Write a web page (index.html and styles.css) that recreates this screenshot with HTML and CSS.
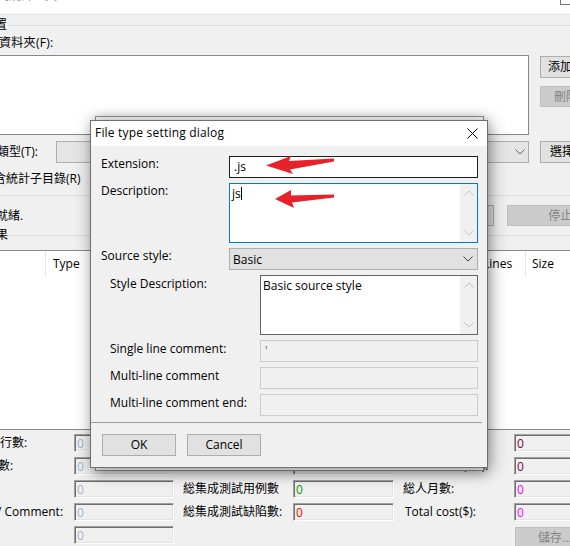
FILE: index.html
```html
<!DOCTYPE html>
<html>
<head>
<meta charset="utf-8">
<link rel="stylesheet" href="styles.css">
</head>
<body>
<div class="titlebar"><span class="app-title">碼統計工具</span><span class="maxbox"></span></div>
<div class="main">
  <div class="group-head"><span class="gh-label">置</span><span class="gh-line"></span></div>
  <div class="field-label">資料夾(F):</div>
  <div class="list-row">
    <div class="listbox"></div>
    <div class="btn-col">
      <div class="btn pad-add">添加(A)...</div>
      <div class="btn disabled pad-del">刪除(D)</div>
    </div>
  </div>
  <div class="type-row">
    <span class="type-label">類型(T):</span>
    <div class="combo"><svg width="10" height="6" viewBox="0 0 10 6"><polyline points="0.5,0.5 5,5 9.5,0.5" fill="none" stroke="#606060" stroke-width="1"/></svg></div>
    <div class="btn pad-sel">選擇(S)...</div>
  </div>
  <div class="check-row">含統計子目錄(R)</div>
  <div class="sep"></div>
  <div class="status-row">
    <span class="status-text">就緒.</span>
    <div class="btn st-btn"></div>
    <div class="btn disabled stop">停止(S)</div>
  </div>
  <div class="group-head g2"><span class="gh-label g2l">果</span><span class="gh-line"></span></div>
  <div class="listview">
    <div class="lv-header">
      <div class="lv-cell c1"></div>
      <div class="lv-cell c2">Type</div>
      <div class="lv-cell c3">Lines</div>
      <div class="lv-cell c4">Size</div>
    </div>
  </div>
  <div class="stats">
    <span class="sl l1">行數:</span><span class="sf blue">0</span>
    <span class="sl"></span><span class="sf red">0</span>
    <span class="sl"></span><span class="sf maroon">0</span>

    <span class="sl l2">數:</span><span class="sf blue">0</span>
    <span class="sl">総單元測試缺陷數:</span><span class="sf red">0</span>
    <span class="sl">総文件大小(KB):</span><span class="sf maroon">0</span>

    <span class="sl l3">:</span><span class="sf blue">0</span>
    <span class="sl">総集成測試用例數</span><span class="sf green">0</span>
    <span class="sl">総人月數:</span><span class="sf magenta">0</span>

    <span class="sl l4">/ Comment:</span><span class="sf blue">0</span>
    <span class="sl">総集成測試缺陷數:</span><span class="sf red">0</span>
    <span class="sl lat">Total cost($):</span><span class="sf magenta">0</span>

    <span class="sl l3">:</span><span class="sf blue">0</span>
    <span class="sl"></span><span class="sl"></span>
    <span class="sl"></span><div class="btn disabled save">儲存...</div>
  </div>
</div>

<div class="rear-win"></div>
<div class="dialog">
  <div class="dlg-title">
    <span class="dlg-title-text">File type setting dialog</span>
    <svg class="close" width="11" height="11" viewBox="0 0 11 11"><path d="M0.5 0.5 L10.5 10.5 M10.5 0.5 L0.5 10.5" stroke="#000" stroke-width="1" fill="none"/></svg>
  </div>
  <div class="dlg-body">
    <div class="frow first">
      <span class="flabel">Extension:</span>
      <div class="tb ext">.js</div>
    </div>
    <div class="frow">
      <span class="flabel">Description:</span>
      <div class="ta focus">
        <div class="ta-text">js<span class="caret"></span></div>
        <div class="vscroll">
          <svg width="10" height="6" viewBox="0 0 10 6"><polyline points="0.5,5.5 5,1 9.5,5.5" fill="none" stroke="#c2c2c2" stroke-width="1"/></svg>
          <svg width="10" height="6" viewBox="0 0 10 6"><polyline points="0.5,0.5 5,5 9.5,0.5" fill="none" stroke="#c2c2c2" stroke-width="1"/></svg>
        </div>
      </div>
    </div>
    <div class="frow">
      <span class="flabel">Source style:</span>
      <div class="dcombo"><span>Basic</span><svg width="10" height="6" viewBox="0 0 10 6"><polyline points="0.5,0.5 5,5 9.5,0.5" fill="none" stroke="#404040" stroke-width="1"/></svg></div>
    </div>
    <div class="frow sub">
      <span class="flabel">Style Description:</span>
      <div class="ta dark">
        <div class="ta-text">Basic source style</div>
        <div class="vscroll">
          <svg width="10" height="6" viewBox="0 0 10 6"><polyline points="0.5,5.5 5,1 9.5,5.5" fill="none" stroke="#c2c2c2" stroke-width="1"/></svg>
          <svg width="10" height="6" viewBox="0 0 10 6"><polyline points="0.5,0.5 5,5 9.5,0.5" fill="none" stroke="#c2c2c2" stroke-width="1"/></svg>
        </div>
      </div>
    </div>
    <div class="frow sub">
      <span class="flabel">Single line comment:</span>
      <div class="tb dis">'</div>
    </div>
    <div class="frow sub">
      <span class="flabel">Multi-line comment</span>
      <div class="tb dis"></div>
    </div>
    <div class="frow sub">
      <span class="flabel">Multi-line comment end:</span>
      <div class="tb dis"></div>
    </div>
    <div class="dlg-sep"></div>
    <div class="dlg-buttons">
      <div class="dbtn">OK</div>
      <div class="dbtn">Cancel</div>
    </div>
  </div>
</div>

<svg class="annot" width="570" height="546" viewBox="0 0 570 546">
  <polygon points="266,165.5 291,156 289,161 334,158.5 334,161.5 290,169.5 293,174" fill="#e8202a"/>
  <polygon points="275,199 291,190 291,195.5 334,194.5 334,197.5 292,202.5 294,208" fill="#e8202a"/>
</svg>
</body>
</html>
```

FILE: styles.css
```css
* { box-sizing: border-box; }
html, body { margin: 0; padding: 0; }
body {
  width: 570px;
  height: 546px;
  overflow: hidden;
  position: relative;
  background: #f0f0f0;
  font-family: "Open Sans", "Noto Sans CJK TC", sans-serif;
  font-size: 12px;
  color: #000;
}

/* main window */
.titlebar {
  height: 13px;
  background: #fff;
  display: flex;
  overflow: hidden;
}
.app-title {
  color: #8a8a8a;
  line-height: 14px;
  margin-top: -11px;
  margin-left: -3px;
  white-space: nowrap;
}
.maxbox {
  margin-left: auto;
  margin-right: -6px;
  width: 16px;
  height: 6px;
  margin-top: -1px;
  border: 1px solid #777;
  flex-shrink: 0;
}
.main {
  display: flex;
  flex-direction: column;
}
.group-head {
  display: flex;
  align-items: center;
  height: 14px;
  margin-top: 5px;
}
.gh-label {
  line-height: 14px;
  margin-left: -5px;
  white-space: nowrap;
}
.gh-line {
  flex: 1;
  height: 1px;
  background: #dcdcdc;
  margin-left: 1px;
}
.field-label {
  line-height: 14px;
  margin-top: 4px;
  margin-left: -1px;
  letter-spacing: 0.3px;
}
.list-row {
  display: flex;
  margin-top: 5px;
}
.listbox {
  margin-left: -10px;
  width: 539px;
  height: 80px;
  flex-shrink: 0;
  background: #fff;
  border: 1px solid #828790;
}
.btn-col {
  margin-left: 11px;
  display: flex;
  flex-direction: column;
  gap: 8px;
  padding-top: 1px;
  flex-shrink: 0;
}
.btn {
  height: 22px;
  width: 80px;
  flex-shrink: 0;
  background: #e1e1e1;
  border: 1px solid #adadad;
  line-height: 20px;
  white-space: nowrap;
  overflow: hidden;
}
.btn.disabled {
  background: #cccccc;
  border-color: #bfbfbf;
  color: #838383;
}
.pad-add { padding-left: 7px; }
.pad-del { padding-left: 13px; height: 21px; }
.pad-sel { padding-left: 9px; margin-left: 11px; }

.type-row {
  display: flex;
  align-items: center;
  margin-top: 6px;
  height: 22px;
}
.type-label {
  width: 59px;
  margin-left: -3px;
  flex-shrink: 0;
  line-height: 14px;
  white-space: nowrap;
}
.combo {
  width: 473px;
  height: 22px;
  flex-shrink: 0;
  background: #e5e5e5;
  border: 1px solid #adadad;
  display: flex;
  justify-content: flex-end;
  align-items: center;
  padding-right: 3px;
}
.check-row {
  line-height: 14px;
  margin-top: 9px;
  margin-left: -6px;
  white-space: nowrap;
}
.sep {
  height: 1px;
  background: #dcdcdc;
  margin-top: 9px;
}
.status-row {
  display: flex;
  align-items: center;
  height: 21px;
  margin-top: 9px;
}
.status-text {
  width: 423px;
  flex-shrink: 0;
  margin-left: -4px;
  line-height: 14px;
  white-space: nowrap;
}
.st-btn { width: 75px; height: 21px; text-align: center; }
.stop { width: 120px; height: 21px; margin-left: 13px; text-align: center; }

.g2 { margin-top: 2px; }
.g2l { margin-left: -4px; }

.listview {
  margin-top: 8px;
  height: 180px;
  background: #fff;
  border-top: 1px solid #828790;
  border-bottom: 1px solid #828790;
}
.lv-header {
  display: flex;
  height: 25px;
}
.lv-cell {
  height: 25px;
  line-height: 25px;
  border-right: 1px solid #e5e5e5;
  flex-shrink: 0;
  white-space: nowrap;
  overflow: hidden;
}
.c1 { width: 46px; }
.c2 { width: 429px; padding-left: 7px; border-right: none; }
.c3 { width: 51px; padding-left: 8px; }
.c4 { width: 80px; padding-left: 6px; border-right: none; }

.stats {
  margin-top: 4px;
  display: grid;
  grid-template-columns: 74px 100px 119px 101px 120px 80px;
  grid-auto-rows: 18px;
  row-gap: 5px;
}
.sl {
  line-height: 18px;
  white-space: nowrap;
  padding-left: 9px;
}
.sl.lat { padding-left: 11px; }
.l1 { padding-left: 0; }
.l2 { padding-left: 0; margin-left: -2px; }
.l3 { padding-left: 0; margin-left: -9px; }
.l4 { padding-left: 0; margin-left: -3px; }
.sf {
  height: 18px;
  line-height: 15px;
  padding-left: 2px;
  background: #f0f0f0;
  border: 1px solid;
  border-color: #a0a0a0 #ffffff #ffffff #a0a0a0;
  box-shadow: inset 1px 1px 0 #6f6f6f, inset -1px -1px 0 #e3e3e3;
  padding-top: 1px;
}
.blue { color: #9fb4d0; }
.red { color: #ff0000; }
.green { color: #00a000; }
.maroon { color: #800040; }
.magenta { color: #ff00ff; }
.save {
  margin-left: 1px;
  margin-top: 1px;
  height: 22px;
  padding-left: 22px;
}

/* dialogs */
.rear-win {
  position: absolute;
  left: 95px;
  top: 116px;
  width: 389px;
  height: 355px;
  background: #f7f7f7;
  border: 1px solid #8f8f8f;
  box-shadow: 1px 2px 10px rgba(0,0,0,0.25);
}
.dialog {
  position: absolute;
  left: 90px;
  top: 120px;
  width: 398px;
  background: #f0f0f0;
  border: 1px solid #6f6f6f;
  box-shadow: 2px 3px 16px rgba(0,0,0,0.42);
}
.dlg-title {
  height: 25px;
  background: #fff;
  display: flex;
  align-items: center;
  padding-left: 4px;
}
.dlg-title-text { line-height: 16px; margin-top: -1px; letter-spacing: 0.2px; }
.close { margin-left: auto; margin-right: 9px; }
.dlg-body {
  padding: 10px 8px 11px 10px;
  display: flex;
  flex-direction: column;
}
.frow {
  display: flex;
  margin-top: 5px;
}
.frow.first { margin-top: 0; }
.flabel {
  width: 128px;
  flex-shrink: 0;
  line-height: 14px;
  padding-top: 1px;
  white-space: nowrap;
}
.frow.sub { padding-left: 9px; }
.frow.sub .flabel { width: 150px; padding-top: 2px; }
.tb {
  width: 249px;
  height: 22px;
  flex-shrink: 0;
  background: #fff;
  border: 1px solid #7a7a7a;
  padding: 0 4px;
  line-height: 19px;
  white-space: nowrap;
}
.frow.sub .tb { width: 218px; }
.tb.ext { border-color: #1e1e1e; }
.tb.dis {
  background: #f0f0f0;
  border-color: #cccccc;
  color: #6d6d6d;
}
.ta {
  width: 249px;
  height: 60px;
  flex-shrink: 0;
  background: #fff;
  border: 1px solid #7a7a7a;
  display: flex;
}
.frow.sub .ta { width: 218px; }
.ta.focus { border-color: #0078d7; }
.ta.dark { border-color: #646464; }
.ta-text {
  flex: 1;
  padding: 2px 2px 0 2px;
  line-height: 15px;
  white-space: nowrap;
}
.caret {
  display: inline-block;
  width: 1px;
  height: 13px;
  background: #000;
  vertical-align: -2px;
}
.vscroll {
  width: 17px;
  flex-shrink: 0;
  background: #f0f0f0;
  display: flex;
  flex-direction: column;
  justify-content: space-between;
  align-items: center;
  padding: 6px 0 6px 0;
}
.dcombo {
  width: 249px;
  height: 22px;
  flex-shrink: 0;
  background: #e1e1e1;
  border: 1px solid #adadad;
  display: flex;
  align-items: center;
  justify-content: space-between;
  padding: 0 4px 0 3px;
  line-height: 19px;
}
.dlg-sep {
  height: 1px;
  background: #a0a0a0;
  margin: 6px -3px 0 -10px;
}
.dlg-buttons {
  display: flex;
  gap: 11px;
  margin-top: 11px;
  padding-left: 1px;
}
.dbtn {
  width: 74px;
  height: 22px;
  background: #e1e1e1;
  border: 1px solid #adadad;
  text-align: center;
  line-height: 19px;
}
.annot {
  position: absolute;
  left: 0;
  top: 0;
  pointer-events: none;
}
```
